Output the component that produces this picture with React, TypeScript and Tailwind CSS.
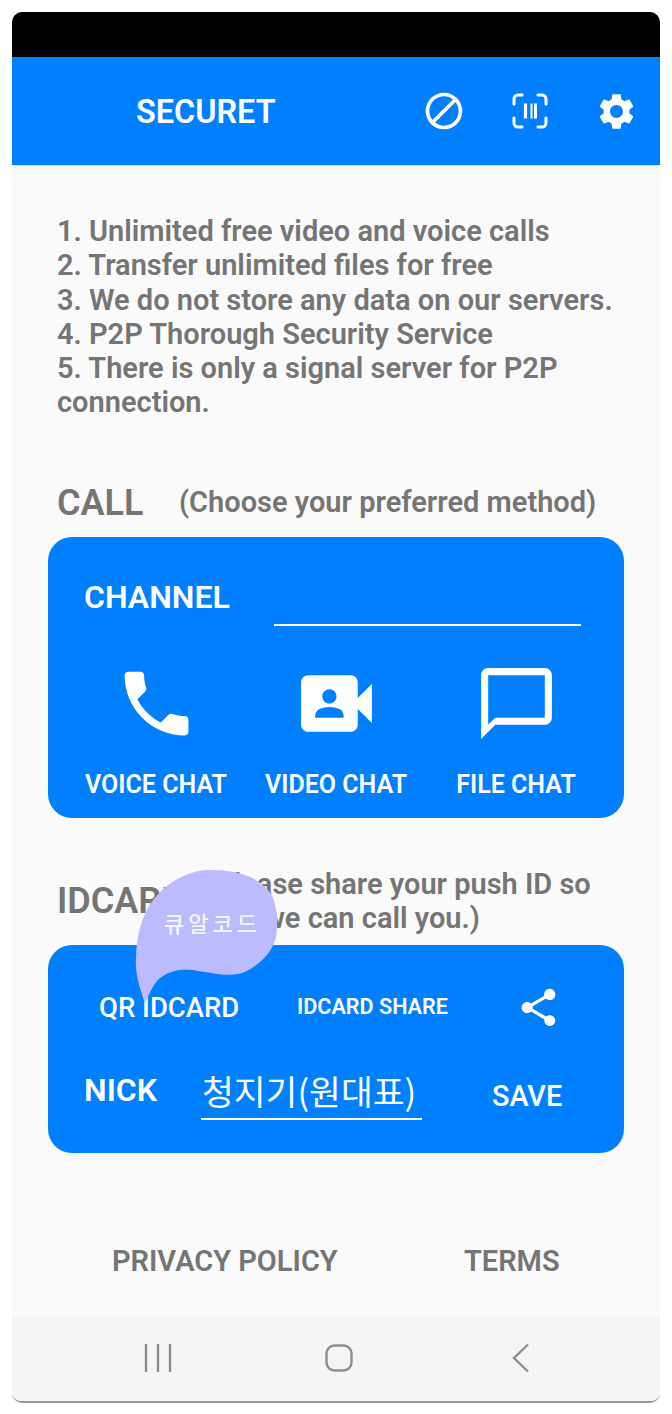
import React from "react";

const roboto = "font-['Roboto',sans-serif]";

function HeaderIcons() {
  return (
    <div className="ml-auto flex items-center">
      <div className="flex w-[87px] translate-x-[1px] justify-center">
        <svg width="44" height="44" viewBox="0 0 24 24" fill="white">
          <path d="M12 2C6.48 2 2 6.48 2 12s4.48 10 10 10 10-4.48 10-10S17.52 2 12 2zM4 12c0-4.42 3.58-8 8-8 1.85 0 3.55.63 4.9 1.69L5.69 16.9C4.63 15.55 4 13.85 4 12zm8 8c-1.85 0-3.55-.63-4.9-1.69L18.31 7.1C19.37 8.45 20 10.15 20 12c0 4.42-3.58 8-8 8z" />
        </svg>
      </div>
      <div className="flex w-[87px] justify-center">
        <svg width="36" height="36" viewBox="0 0 36 36" fill="none" stroke="white" strokeWidth="3" strokeLinecap="round">
          <path d="M2 11V6a4 4 0 0 1 4-4h4" />
          <path d="M26 2h4a4 4 0 0 1 4 4v5" />
          <path d="M2 25v5a4 4 0 0 0 4 4h4" />
          <path d="M26 34h4a4 4 0 0 0 4-4v-5" />
          <path d="M13.5 10.5v15" strokeLinecap="butt" strokeWidth="3.2" />
          <path d="M19.5 10.5v15" strokeLinecap="butt" strokeWidth="2" />
          <path d="M23.5 10.5v15" strokeLinecap="butt" strokeWidth="3" />
        </svg>
      </div>
      <div className="flex w-[87px] justify-center">
        <svg width="43" height="43" viewBox="0 0 24 24" fill="white">
          <path d="M19.14 12.94c.04-.3.06-.61.06-.94 0-.32-.02-.64-.07-.94l2.03-1.58c.18-.14.23-.41.12-.61l-1.92-3.32c-.12-.22-.37-.29-.59-.22l-2.39.96c-.5-.38-1.03-.7-1.62-.94l-.36-2.54c-.04-.24-.24-.41-.48-.41h-3.84c-.24 0-.43.17-.47.41l-.36 2.54c-.59.24-1.13.57-1.62.94l-2.39-.96c-.22-.08-.47 0-.59.22L2.74 8.87c-.12.21-.08.47.12.61l2.03 1.58c-.05.3-.09.63-.09.94s.02.64.07.94l-2.03 1.58c-.18.14-.23.41-.12.61l1.92 3.32c.12.22.37.29.59.22l2.39-.96c.5.38 1.03.7 1.62.94l.36 2.54c.05.24.24.41.48.41h3.84c.24 0 .44-.17.47-.41l.36-2.54c.59-.24 1.13-.56 1.62-.94l2.39.96c.22.08.47 0 .59-.22l1.92-3.32c.12-.22.07-.47-.12-.61l-2.01-1.58zM12 15.6c-1.98 0-3.6-1.62-3.6-3.6s1.62-3.6 3.6-3.6 3.6 1.62 3.6 3.6-1.62 3.6-3.6 3.6z" />
        </svg>
      </div>
    </div>
  );
}

function ChatOption({ label, path }: { label: string; path: string }) {
  return (
    <div className="flex w-[180px] flex-col items-center">
      <svg width="85" height="85" viewBox="0 0 24 24" fill="white">
        <path d={path} />
      </svg>
      <span className="mt-[24px] text-[25px] leading-[30px] font-semibold text-white">{label}</span>
    </div>
  );
}

export default function App() {
  return (
    <div className={`relative h-[1414px] w-[672px] overflow-hidden bg-white px-3 pt-3 ${roboto}`}>
      <div className="flex h-[1391px] flex-col overflow-hidden rounded-[10px] border-b-2 border-[#999999] bg-[#fafafa]">
        <div className="h-[45px] bg-black" />
        <header className="flex h-[108px] items-center bg-[#007fff] pl-[124px] shadow-sm">
          <h1 className="translate-y-[1px] text-[32.4px] font-semibold text-white">SECURET</h1>
          <HeaderIcons />
        </header>

        <main className="flex-1 px-9">
          <div className="mt-[49px] pl-[9px] text-[29px] leading-[34.3px] font-semibold text-[#757575]">
            <p>1. Unlimited free video and voice calls</p>
            <p>2. Transfer unlimited files for free</p>
            <p>3. We do not store any data on our servers.</p>
            <p>4. P2P Thorough Security Service</p>
            <p>5. There is only a signal server for P2P</p>
            <p>connection.</p>
          </div>

          <div className="mt-[60px] flex items-center pl-[9px] text-[#757575]">
            <span className="w-[122px] text-[36px] leading-[46px] font-semibold">CALL</span>
            <span className="-translate-y-[1px] text-[29px] leading-[34px] font-semibold">(Choose your preferred method)</span>
          </div>

          <section className="mt-[11px] h-[281px] rounded-[24px] bg-[#007fff]">
            <div className="flex items-start pt-[40px] pl-[36px]">
              <span className="w-[190px] text-[32px] leading-[40px] font-semibold text-white">CHANNEL</span>
              <div className="h-[49px] w-[307px] border-b-2 border-white" />
            </div>
            <div className="mt-[35px] flex pl-[18px]">
              <ChatOption
                label="VOICE CHAT"
                path="M6.62 10.79c1.44 2.83 3.76 5.14 6.59 6.59l2.2-2.2c.27-.27.67-.36 1.02-.24 1.12.37 2.33.57 3.57.57.55 0 1 .45 1 1V20c0 .55-.45 1-1 1-9.39 0-17-7.61-17-17 0-.55.45-1 1-1h3.5c.55 0 1 .45 1 1 0 1.25.2 2.45.57 3.57.11.35.03.74-.25 1.02l-2.2 2.2z"
              />
              <ChatOption
                label="VIDEO CHAT"
                path="M18 10.48V6c0-1.1-.9-2-2-2H4c-1.1 0-2 .9-2 2v12c0 1.1.9 2 2 2h12c1.1 0 2-.9 2-2v-4.48l4 3.98v-11l-4 3.98zM10 8c1.1 0 2 .9 2 2s-.9 2-2 2-2-.9-2-2 .9-2 2-2zm4 8H6v-.57c0-.81.48-1.53 1.22-1.85.85-.37 1.79-.58 2.78-.58.99 0 1.93.21 2.78.58.74.32 1.22 1.04 1.22 1.85V16z"
              />
              <ChatOption
                label="FILE CHAT"
                path="M20 2H4c-1.1 0-2 .9-2 2v18l4-4h14c1.1 0 2-.9 2-2V4c0-1.1-.9-2-2-2zm0 14H6l-2 2V4h16v12z"
              />
            </div>
          </section>

          <div className="mt-[49px] flex pl-[9px] text-[#757575]">
            <span className="mt-[11px] w-[148px] text-[36px] leading-[46px] font-semibold">IDCARD</span>
            <div className="text-[29px] leading-[34px] font-semibold">
              <p>(Please share your push ID so</p>
              <p>that we can call you.)</p>
            </div>
          </div>

          <section className="mt-[10px] h-[208px] rounded-[24px] bg-[#007fff] text-white">
            <div className="flex items-center pt-[41px]">
              <span className="ml-[51px] w-[198px] text-[27.5px] leading-[38px] font-medium">QR IDCARD</span>
              <span className="w-[200px] -translate-y-[1px] text-[21.6px] leading-[38px] font-semibold">IDCARD SHARE</span>
              <svg width="45" height="45" viewBox="0 0 24 24" fill="white" className="ml-[18px] translate-x-[1px] -translate-y-[1px]">
                <path d="M18 16.08c-.76 0-1.44.3-1.96.77L8.91 12.7c.05-.23.09-.46.09-.7s-.04-.47-.09-.7l7.05-4.11c.54.5 1.25.81 2.04.81 1.66 0 3-1.34 3-3s-1.34-3-3-3-3 1.34-3 3c0 .24.04.47.09.7L8.04 9.81C7.5 9.31 6.79 9 6 9c-1.66 0-3 1.34-3 3s1.34 3 3 3c.79 0 1.5-.31 2.04-.81l7.12 4.16c-.05.21-.08.43-.08.65 0 1.61 1.31 2.92 2.92 2.92 1.61 0 2.92-1.31 2.92-2.92s-1.31-2.92-2.92-2.92z" />
              </svg>
            </div>
            <div className="mt-[35px] flex items-start">
              <span className="mt-[4px] ml-[36px] w-[117px] text-[32px] leading-[40px] font-semibold">NICK</span>
              <div className="h-[54px] w-[221px] border-b-2 border-white pl-[1px] font-['Noto_Sans_CJK_KR','Roboto',sans-serif] text-[34.6px] leading-[48px]">
                청지기(원대표)
              </div>
              <span className="mt-[13px] ml-[70px] text-[28.8px] leading-[34px] font-medium">SAVE</span>
            </div>
          </section>

          <div className="mt-[90px] flex text-[29px] leading-[36px] font-semibold text-[#757575]">
            <span className="ml-[64px] w-[352px]">PRIVACY POLICY</span>
            <span>TERMS</span>
          </div>
        </main>

        <nav className="flex h-[86px] items-center bg-[#f5f5f5]">
          <svg width="28" height="28" viewBox="0 0 28 28" stroke="#8e8e8e" strokeWidth="2.4" fill="none" className="ml-[132px]">
            <path d="M2 0v28M14 0v28M26 0v28" />
          </svg>
          <svg width="28" height="28" viewBox="0 0 28 28" stroke="#8e8e8e" strokeWidth="2.4" fill="none" className="ml-[153px]">
            <rect x="1.5" y="1.5" width="25" height="25" rx="8" />
          </svg>
          <svg width="18" height="30" viewBox="0 0 18 30" stroke="#8e8e8e" strokeWidth="2.4" fill="none" className="ml-[159px]">
            <path d="M16 1.5 2 15l14 13.5" />
          </svg>
        </nav>
      </div>

      <svg width="150" height="140" viewBox="0 0 150 140" className="absolute top-[866px] left-[132px]">
        <path
          fill="#bdbbff"
          d="M13 137C6 118 3 105 4 91C5 70 8 58 15 44C24 26 48 4 78 4C105 4 126 10 139 28C146 40 146 60 144 71C140 87 129 97 115 105C101 112 85 108 61 104C47 102 34 106 25 115C20 121 17 129 13 137Z"
        />
      </svg>
      <span className="absolute top-[908px] left-[164px] font-['Noto_Sans_CJK_KR',sans-serif] text-[22px] leading-[28px] font-medium tracking-[4px] text-[#f4f4ff]">
        큐알코드
      </span>
    </div>
  );
}
